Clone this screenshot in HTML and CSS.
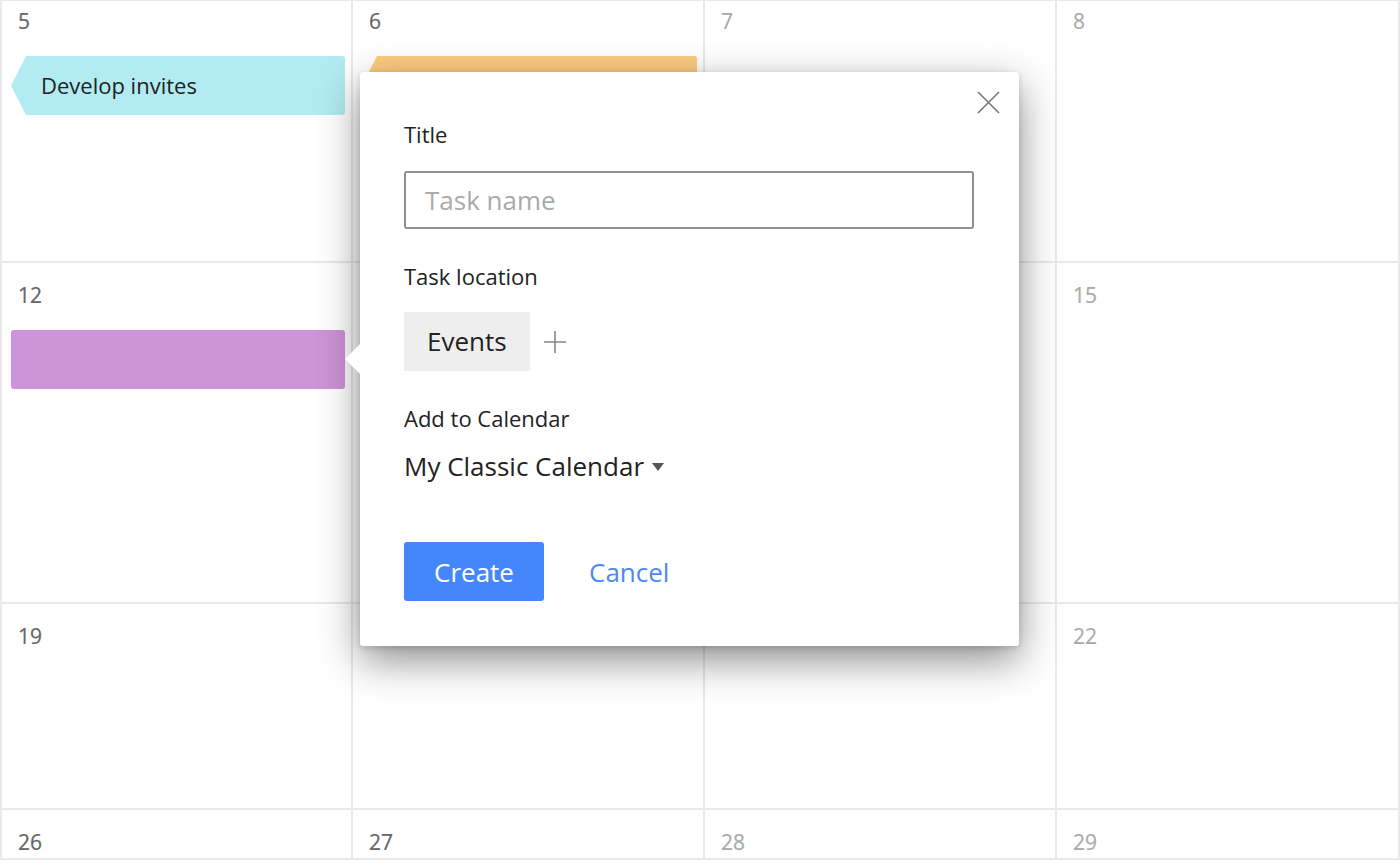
FILE: index.html
```html
<!DOCTYPE html>
<html lang="en">
<head>
<meta charset="utf-8">
<title>Calendar – New task</title>
<link rel="stylesheet" href="styles.css">
</head>
<body>
<div class="calendar">
  <div class="cell cell--top">
    <div class="date">5</div>
    <div class="event event--cyan event--arrow">Develop invites</div>
  </div>
  <div class="cell cell--top">
    <div class="date">6</div>
    <div class="event event--orange event--arrow"></div>
  </div>
  <div class="cell cell--top"><div class="date date--muted">7</div></div>
  <div class="cell cell--top"><div class="date date--muted">8</div></div>

  <div class="cell">
    <div class="date">12</div>
    <div class="event event--purple"></div>
  </div>
  <div class="cell"><div class="date">13</div></div>
  <div class="cell"><div class="date date--muted">14</div></div>
  <div class="cell"><div class="date date--muted">15</div></div>

  <div class="cell"><div class="date">19</div></div>
  <div class="cell"><div class="date">20</div></div>
  <div class="cell"><div class="date date--muted">21</div></div>
  <div class="cell"><div class="date date--muted">22</div></div>

  <div class="cell"><div class="date">26</div></div>
  <div class="cell"><div class="date">27</div></div>
  <div class="cell"><div class="date date--muted">28</div></div>
  <div class="cell"><div class="date date--muted">29</div></div>
</div>

<div class="popover">
  <button class="close" aria-label="Close">
    <svg width="23" height="23" viewBox="0 0 23 23"><path d="M1 1L22 22M22 1L1 22" stroke="#777" stroke-width="1.6" fill="none"/></svg>
  </button>
  <div class="label label--first">Title</div>
  <div class="input">Task name</div>
  <div class="label">Task location</div>
  <div class="location">
    <span class="chip">Events</span>
    <svg class="plus" width="22" height="22" viewBox="0 0 22 22"><path d="M11 0V22M0 11H22" stroke="#888" stroke-width="1.6" fill="none"/></svg>
  </div>
  <div class="label">Add to Calendar</div>
  <div class="select">My Classic Calendar <span class="caret"></span></div>
  <div class="actions">
    <button class="btn-create">Create</button>
    <button class="btn-cancel">Cancel</button>
  </div>
</div>
</body>
</html>
```

FILE: styles.css
```css
* { box-sizing: border-box; }
html, body { margin: 0; padding: 0; }
body {
  width: 1400px;
  height: 860px;
  overflow: hidden;
  position: relative;
  font-family: "Open Sans", "Noto Sans", sans-serif;
  color: #222;
  background: #fff;
}

.calendar {
  display: grid;
  grid-template-columns: 349px 350px 350px 1fr;
  grid-template-rows: 260px 339px 204px 48px;
  gap: 2px;
  padding: 1px 2px 2px 2px;
  background: #e9e9e9;
  height: 860px;
}
.cell {
  background: #fff;
  padding-top: 18px;
  overflow: hidden;
}
.cell--top { padding-top: 6px; }

.date {
  font-size: 21px;
  line-height: 28px;
  color: #666;
  padding-left: 16px;
  -webkit-text-stroke: 0.2px #666;
}
.date--muted { color: #aaa; -webkit-text-stroke: 0.2px #aaa; }

.event {
  margin: 21px 6px 0 9px;
  height: 59px;
  border-radius: 3px;
  font-size: 22px;
  line-height: 59px;
  padding-left: 30px;
  color: #222;
}
.event--arrow {
  clip-path: polygon(15px 0, 100% 0, 100% 100%, 15px 100%, 0 50%);
}
.event--cyan { background: #b2ebf2; }
.event--orange { background: #ffcc80; }
.event--purple { background: #ce93d8; }

.popover {
  position: absolute;
  left: 360px;
  top: 72px;
  width: 659px;
  background: #fff;
  border-radius: 3px;
  padding: 47px 45px 45px 44px;
  box-shadow: 0 14px 40px rgba(0, 0, 0, 0.45), 0 2px 6px rgba(0, 0, 0, 0.14);
  display: flex;
  flex-direction: column;
  align-items: flex-start;
}
.popover::before {
  content: "";
  position: absolute;
  left: -15px;
  top: 272px;
  border-style: solid;
  border-width: 15px 15px 15px 0;
  border-color: transparent #fff transparent transparent;
}

.close {
  position: absolute;
  top: 19px;
  right: 19px;
  width: 23px;
  height: 23px;
  padding: 0;
  border: 0;
  background: none;
  display: flex;
}

.label {
  font-size: 22px;
  line-height: 30px;
  color: #222;
  margin-top: 32px;
}
.label--first { margin-top: 0; }

.input {
  margin-top: 22px;
  width: 100%;
  height: 58px;
  border: 2px solid #8f8f8f;
  border-radius: 3px;
  padding-left: 19px;
  font-size: 26px;
  line-height: 54px;
  color: #aaa;
}

.location {
  margin-top: 21px;
  display: flex;
  align-items: center;
  gap: 14px;
}
.chip {
  display: block;
  height: 59px;
  padding: 0 23px;
  background: #eee;
  font-size: 26px;
  line-height: 59px;
  color: #222;
}
.plus { display: block; }

.select {
  margin-top: 15px;
  font-size: 26px;
  line-height: 36px;
  color: #222;
  display: flex;
  align-items: center;
  gap: 8px;
}
.caret {
  display: block;
  width: 0;
  height: 0;
  border-style: solid;
  border-width: 8px 6px 0 6px;
  border-color: #555 transparent transparent transparent;
  margin-top: 2px;
}

.actions {
  margin-top: 58px;
  display: flex;
  align-items: center;
  gap: 45px;
}
.btn-create {
  width: 140px;
  height: 59px;
  border: 0;
  border-radius: 3px;
  background: #4487fc;
  color: #fff;
  font-family: inherit;
  font-size: 26px;
  padding: 0;
}
.btn-cancel {
  border: 0;
  background: none;
  padding: 0;
  font-family: inherit;
  font-size: 26px;
  color: #4a8af4;
}
```
